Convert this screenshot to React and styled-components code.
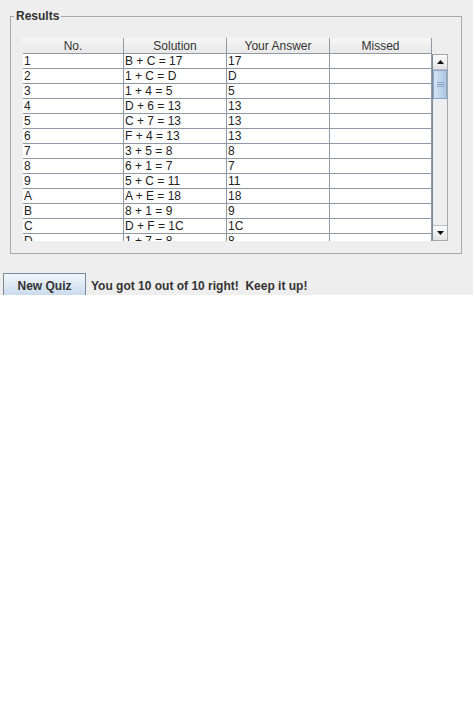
import React from "react";
import styled, { createGlobalStyle } from "styled-components";

const GlobalStyle = createGlobalStyle`
  body {
    margin: 0;
    background: #ffffff;
    font-family: "Liberation Sans", Arial, sans-serif;
  }
`;

// rows of the results table (hex quiz)
const results = [
  ["1", "B + C = 17", "17", ""],
  ["2", "1 + C = D", "D", ""],
  ["3", "1 + 4 = 5", "5", ""],
  ["4", "D + 6 = 13", "13", ""],
  ["5", "C + 7 = 13", "13", ""],
  ["6", "F + 4 = 13", "13", ""],
  ["7", "3 + 5 = 8", "8", ""],
  ["8", "6 + 1 = 7", "7", ""],
  ["9", "5 + C = 11", "11", ""],
  ["A", "A + E = 18", "18", ""],
  ["B", "8 + 1 = 9", "9", ""],
  ["C", "D + F = 1C", "1C", ""],
  ["D", "1 + 7 = 8", "8", ""],
  ["E", "2 + 9 = B", "B", ""],
];

const columns = ["No.", "Solution", "Your Answer", "Missed"];
const widths = [101, 103, 103, 102];

export default function App() {
  return (
    <>
      <GlobalStyle />
      <Window>
        <ResultsBox>
          <Legend>Results</Legend>
          <ScrollPane>
            <Viewport>
              <HeaderRow>
                {columns.map((c, i) => (
                  <HeaderCell key={c} $w={widths[i]}>
                    {c}
                  </HeaderCell>
                ))}
              </HeaderRow>
              <Body>
                {results.map((row) => (
                  <Row key={row[0]}>
                    {row.map((cell, i) => (
                      <Cell key={i} $w={widths[i]}>
                        {cell}
                      </Cell>
                    ))}
                  </Row>
                ))}
              </Body>
            </Viewport>
            <ScrollColumn>
              <Corner />
              <ScrollBar>
                <ArrowButton>
                  <Arrow viewBox="0 0 7 4">
                    <path d="M0 4 L3.5 0 L7 4 Z" />
                  </Arrow>
                </ArrowButton>
                <Thumb>
                  <Grip />
                  <Grip />
                  <Grip />
                </Thumb>
                <Track />
                <ArrowButton>
                  <Arrow viewBox="0 0 7 4">
                    <path d="M0 0 L7 0 L3.5 4 Z" />
                  </Arrow>
                </ArrowButton>
              </ScrollBar>
            </ScrollColumn>
          </ScrollPane>
        </ResultsBox>
        <BottomRow>
          <QuizButton>New Quiz</QuizButton>
          <Message>You got 10 out of 10 right!  Keep it up!</Message>
        </BottomRow>
      </Window>
    </>
  );
}

const Window = styled.div`
  width: 473px;
  height: 295px;
  background: #eeeeee;
  overflow: hidden;
  display: flex;
  flex-direction: column;
`;

const ResultsBox = styled.fieldset`
  margin: 8px 11px 0 10px;
  padding: 14px 12px 12px 12px;
  border: 1px solid #a8a8a8;
  min-width: 0;
`;

const Legend = styled.legend`
  margin-left: -9px;
  padding: 0 2px;
  font-size: 12px;
  line-height: 16px;
  font-weight: bold;
  color: #333333;
`;

const ScrollPane = styled.div`
  display: flex;
  height: 203px;
`;

const Viewport = styled.div`
  width: 409px;
  display: flex;
  flex-direction: column;
  background: #ffffff;
`;

const HeaderRow = styled.div`
  display: flex;
  height: 16px;
  background: linear-gradient(#f6f6f6, #e8e8e8);
  border-bottom: 1px solid #8f9aa6;
  box-sizing: border-box;
`;

const HeaderCell = styled.div`
  width: ${(p) => p.$w}px;
  box-sizing: border-box;
  border-right: 1px solid #8f9aa6;
  padding-top: 2px;
  font-size: 12px;
  line-height: 13px;
  color: #333333;
  text-align: center;
  white-space: nowrap;
`;

const Body = styled.div`
  height: 187px;
  overflow: hidden;
  background: #ffffff;
`;

const Row = styled.div`
  display: flex;
  height: 15px;
  border-bottom: 1px solid #8f9aa6;
  box-sizing: border-box;
`;

const Cell = styled.div`
  width: ${(p) => p.$w}px;
  box-sizing: border-box;
  border-right: 1px solid #8f9aa6;
  padding: 1px 0 0 1px;
  font-size: 12px;
  line-height: 13px;
  color: #222222;
  white-space: nowrap;
  overflow: hidden;
`;

const ScrollColumn = styled.div`
  width: 16px;
  display: flex;
  flex-direction: column;
`;

const Corner = styled.div`
  height: 16px;
  background: #eeeeee;
`;

const ScrollBar = styled.div`
  height: 187px;
  box-sizing: border-box;
  border: 1px solid #a0aab4;
  border-left-color: #7a8a99;
  background: #eeeeee;
  display: flex;
  flex-direction: column;
`;

const ArrowButton = styled.div`
  height: 14px;
  flex: none;
  background: linear-gradient(#fafafa, #e4e4e4);
  border-bottom: 1px solid #b8c0c8;
  display: flex;
  align-items: center;
  justify-content: center;
  &:last-child {
    border-bottom: none;
    border-top: 1px solid #b8c0c8;
  }
`;

const Arrow = styled.svg`
  width: 7px;
  height: 4px;
  fill: #111111;
`;

const Thumb = styled.div`
  height: 29px;
  flex: none;
  box-sizing: border-box;
  border: 1px solid #8da4c4;
  background: linear-gradient(90deg, #d6e4f4, #bdd2ea 60%, #aec6e3);
  display: flex;
  flex-direction: column;
  align-items: center;
  justify-content: center;
  gap: 1px;
`;

const Grip = styled.div`
  width: 7px;
  height: 1px;
  background: #8aa2c2;
`;

const Track = styled.div`
  flex: 1;
  background: #eeeeee;
`;

const BottomRow = styled.div`
  display: flex;
  align-items: center;
  gap: 5px;
  margin-top: 19px;
  padding-left: 3px;
`;

const QuizButton = styled.button`
  width: 83px;
  height: 26px;
  flex: none;
  border: 1px solid #7a8a99;
  border-radius: 0;
  background: linear-gradient(#f2f6fb, #dde8f3 45%, #c6d8ec);
  font-family: "Liberation Sans", Arial, sans-serif;
  font-size: 12px;
  font-weight: bold;
  color: #333333;
  padding: 0;
`;

const Message = styled.span`
  font-size: 12px;
  font-weight: bold;
  color: #333333;
  white-space: pre;
`;
